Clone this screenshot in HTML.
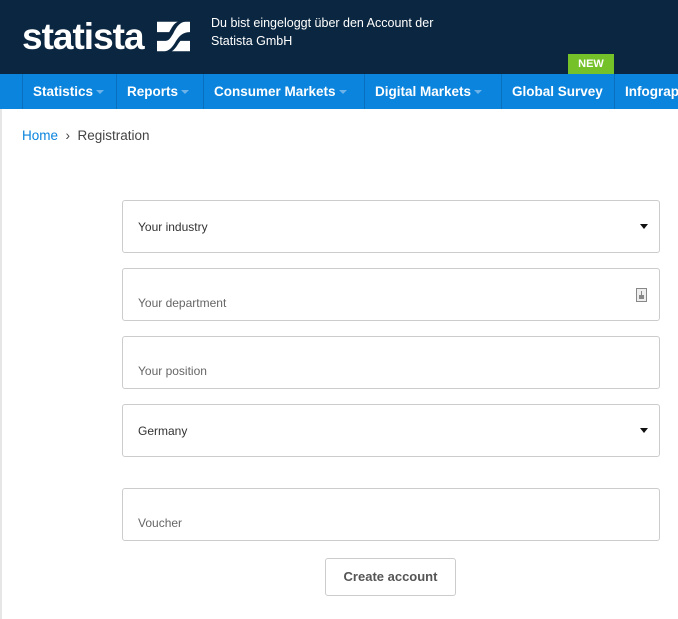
<!DOCTYPE html>
<html><head><meta charset="utf-8"><style>
body{margin:0;width:678px;height:619px;overflow:hidden;background:#fff;font-family:"Liberation Sans",sans-serif;position:relative}
.hdr{position:absolute;left:0;top:0;width:678px;height:74px;background:#0b2640}
.logo{position:absolute;left:22px;top:15px;color:#fff;font-size:37px;font-weight:bold;letter-spacing:-1px;line-height:44px}
.msg{position:absolute;left:211px;top:14px;color:#fff;font-size:12.5px;line-height:18px}
.new{position:absolute;left:568px;top:54px;width:46px;height:20px;background:#74c12a;color:#fff;font-size:11px;font-weight:bold;text-align:center;line-height:20px}
.nav{position:absolute;left:0;top:74px;width:678px;height:35px;background:#0b84dd}
.nav span{position:absolute;top:0;height:35px;line-height:35px;color:#fff;font-weight:bold;font-size:13.5px;border-left:1px solid #0a6fbd;padding-left:10px;white-space:nowrap}
.car{display:inline-block;width:0;height:0;border-left:4px solid transparent;border-right:4px solid transparent;border-top:4px solid #6db3ea;margin-left:3px;vertical-align:middle}
.lb{position:absolute;left:0;top:109px;width:2px;height:510px;background:#e6e6e6}
.bc{position:absolute;left:22px;top:128px;font-size:13.5px;color:#444}
.bc a{color:#0b84dd}
.f{position:absolute;left:122px;width:536px;height:51px;border:1px solid #ccc;border-radius:3px;font-size:12px;color:#333}
.f .t{position:absolute;left:15px}
.arr{position:absolute;right:11px;top:23px;border-left:4px solid transparent;border-right:4px solid transparent;border-top:5px solid #111}
.btn{position:absolute;left:325px;top:558px;width:129px;height:36px;border:1px solid #ccc;border-radius:3px;text-align:center;line-height:36px;font-size:13px;font-weight:bold;color:#555}
</style></head><body>
<div class="hdr">
<div class="logo">statista</div>
<svg style="position:absolute;left:157px;top:20px" width="33" height="33" viewBox="0 0 38 34"><path d="M0 0H38V12C30 12 26 16 22 22C19 27 15 34 8 34H0V22H10C14 22 16 18 19 13C22 7 26 0 33 0Z" fill="#fff"/><path d="M0 0H24C19 2 17 7 14 12H0Z M38 22V34H17C22 31 24 25 27 22Z" fill="#fff"/></svg>
<div class="msg">Du bist eingeloggt über den Account der<br>Statista GmbH</div>
<div class="new">NEW</div>
</div>
<div class="nav">
<span style="left:22px">Statistics<i class="car"></i></span>
<span style="left:116px">Reports<i class="car"></i></span>
<span style="left:203px">Consumer Markets<i class="car"></i></span>
<span style="left:364px">Digital Markets<i class="car"></i></span>
<span style="left:501px">Global Survey</span>
<span style="left:614px">Infographics</span>
</div>
<div class="lb"></div>
<div class="bc"><a>Home</a> &nbsp;›&nbsp; Registration</div>
<div class="f" style="top:200px"><span class="t" style="top:19px">Your industry</span><i class="arr"></i></div>
<div class="f" style="top:268px;color:#666"><span class="t" style="top:27px">Your department</span><svg style="position:absolute;right:12px;top:19px" width="11" height="14"><rect x="0.5" y="0.5" width="10" height="13" fill="#eee" stroke="#888"/><rect x="3" y="7" width="5" height="4" fill="#888"/><rect x="5" y="3" width="1" height="4" fill="#888"/></svg></div>
<div class="f" style="top:336px;color:#666"><span class="t" style="top:27px">Your position</span></div>
<div class="f" style="top:404px"><span class="t" style="top:19px">Germany</span><i class="arr"></i></div>
<div class="f" style="top:488px;color:#666"><span class="t" style="top:27px">Voucher</span></div>
<div class="btn">Create account</div>
</body></html>
